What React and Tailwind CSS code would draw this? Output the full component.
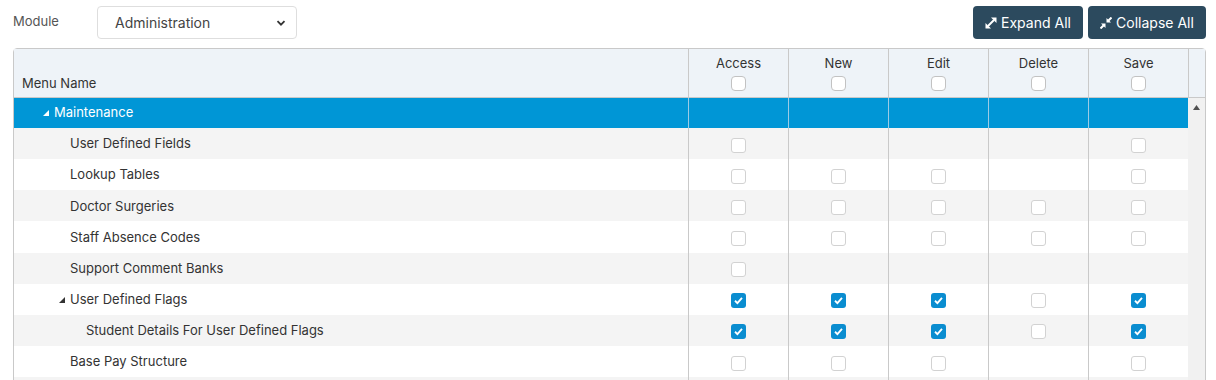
import React from 'react';

const cols = ['Access', 'New', 'Edit', 'Delete', 'Save'];

// each cell: null = no checkbox, false = unchecked, true = checked
const rows = [
    { name: 'User Defined Fields', level: 1, cells: [false, null, null, null, false] },
    { name: 'Lookup Tables', level: 1, cells: [false, false, false, null, false] },
    { name: 'Doctor Surgeries', level: 1, cells: [false, false, false, false, false] },
    { name: 'Staff Absence Codes', level: 1, cells: [false, false, false, false, false] },
    { name: 'Support Comment Banks', level: 1, cells: [false, null, null, null, null] },
    { name: 'User Defined Flags', level: 1, toggle: true, cells: [true, true, true, false, true] },
    { name: 'Student Details For User Defined Flags', level: 2, cells: [true, true, true, false, true] },
    { name: 'Base Pay Structure', level: 1, cells: [false, false, false, null, false] },
    { name: '', level: 1, cells: [null, null, null, null, null] },
];

const Tri = ({ className }) => (
    <svg width="6" height="6" viewBox="0 0 6 6" className={className}>
        <polygon points="6,0 6,6 0,6" fill="currentColor" />
    </svg>
);

const Check = ({ checked, header }) =>
    checked ? (
        <span className="block w-[15px] h-[15px] rounded-[3px] bg-[#0a8dd0] flex items-center justify-center">
            <svg width="11" height="11" viewBox="0 0 12 12">
                <path d="M2.2 6.3 L4.8 8.8 L9.8 3.2" stroke="white" strokeWidth="2" fill="none" />
            </svg>
        </span>
    ) : (
        <span
            className={
                'block w-[15px] h-[15px] bg-white border ' +
                (header ? 'rounded-[4px] border-[#c2c2c2]' : 'rounded-[3px] border-[#d2d2d2]')
            }
        />
    );

const ExpandIcon = () => (
    <svg width="12" height="12" viewBox="0 0 12 12">
        <line x1="3" y1="9" x2="9" y2="3" stroke="white" strokeWidth="2" />
        <polygon points="11.5,0.5 11.5,6 6,0.5" fill="white" />
        <polygon points="0.5,11.5 0.5,6 6,11.5" fill="white" />
    </svg>
);

const CollapseIcon = () => (
    <svg width="12" height="12" viewBox="0 0 12 12">
        <line x1="8" y1="4" x2="11.5" y2="0.5" stroke="white" strokeWidth="2" />
        <polygon points="6.5,5.5 6.5,1 11,5.5" fill="white" />
        <line x1="4" y1="8" x2="0.5" y2="11.5" stroke="white" strokeWidth="2" />
        <polygon points="5.5,6.5 5.5,11 1,6.5" fill="white" />
    </svg>
);

const App = () => {
    return (
        <div className="w-[1216px] h-[380px] overflow-hidden bg-white pl-[13px] pt-[6px] font-['Inter','Noto_Sans',sans-serif] text-[#333]">
            <div className="flex items-start w-[1193px] h-[42px]">
                <div className="text-[13px] text-[#555] pt-[6px] w-[84px]">Module</div>
                <div className="w-[200px] h-[33px] border border-[#dedede] rounded-[4px] flex items-center justify-between pl-[17px] pr-[10px] text-[14px] text-[#444]">
                    <span>Administration</span>
                    <svg width="10" height="10" viewBox="0 0 10 10">
                        <path d="M1.5 3.2 L5 6.7 L8.5 3.2" stroke="#333" strokeWidth="1.8" fill="none" />
                    </svg>
                </div>
                <div className="ml-auto flex gap-[5px]">
                    <button className="h-[33px] w-[110px] rounded-[4px] bg-[#2c4a5e] text-white text-[14px] flex items-center justify-center gap-[4px]">
                        <ExpandIcon />
                        <span>Expand All</span>
                    </button>
                    <button className="h-[33px] w-[118px] rounded-[4px] bg-[#2c4a5e] text-white text-[14px] flex items-center justify-center gap-[4px]">
                        <CollapseIcon />
                        <span>Collapse All</span>
                    </button>
                </div>
            </div>

            <div className="w-[1193px] border border-[#c9c9c9] rounded-t-[4px] text-[13px]">
                {/* header */}
                <div className="flex h-[49px] bg-[#eef3f8] border-b border-[#c9c9c9]">
                    <div className="w-[674px] flex items-end pl-[8px] pb-[4px]">Menu Name</div>
                    {cols.map((c) => (
                        <div key={c} className="w-[100px] border-l border-[#c9c9c9] flex flex-col items-center pt-[6px]">
                            <span className="leading-[16px]">{c}</span>
                            <span className="mt-[5px]">
                                <Check header />
                            </span>
                        </div>
                    ))}
                    <div className="w-[17px] border-l border-[#c9c9c9]" />
                </div>

                {/* body */}
                <div className="flex">
                    <div className="w-[1174px]">
                        <div className="flex h-[30px] bg-[#0096d6] text-white">
                            <div className="w-[674px] flex items-center pl-[29px] gap-[5px]">
                                <Tri className="text-white" />
                                <span>Maintenance</span>
                            </div>
                            {cols.map((c) => (
                                <div key={c} className="w-[100px] border-l border-[#9ccbe6]" />
                            ))}
                        </div>
                        {rows.map((r, i) => (
                            <div
                                key={i}
                                className={'flex h-[31.15px] ' + (i % 2 === 0 ? 'bg-[#f4f4f4]' : 'bg-white')}
                            >
                                <div
                                    className={
                                        'w-[674px] flex items-center gap-[5px] pt-[1px] ' +
                                        (r.level === 2 ? 'pl-[72px]' : r.toggle ? 'pl-[45px]' : 'pl-[56px]')
                                    }
                                >
                                    {r.toggle && <Tri className="text-[#333]" />}
                                    <span>{r.name}</span>
                                </div>
                                {r.cells.map((v, j) => (
                                    <div
                                        key={j}
                                        className="w-[100px] border-l border-[#c9c9c9] flex items-center justify-center pt-[3px]"
                                    >
                                        {v !== null && <Check checked={v} />}
                                    </div>
                                ))}
                            </div>
                        ))}
                    </div>
                    <div className="w-[17px] bg-[#f1f1f1] flex justify-center pt-[7px]">
                        <svg width="7" height="5" viewBox="0 0 7 5">
                            <polygon points="3.5,0 7,5 0,5" fill="#505050" />
                        </svg>
                    </div>
                </div>
            </div>
        </div>
    );
};

export default App;
